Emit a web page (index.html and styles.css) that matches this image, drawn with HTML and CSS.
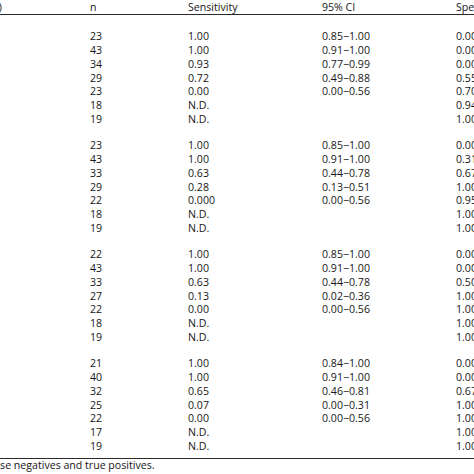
FILE: index.html
```html
<!DOCTYPE html>
<html lang="en">
<head>
<meta charset="utf-8">
<title>Diagnostic accuracy table</title>
<link rel="stylesheet" href="styles.css">
</head>
<body>
<div class="page">
  <div class="row head">
    <div class="c label"><span>Cut-off (mg/L)</span></div>
    <div class="c">n</div>
    <div class="c">Sensitivity</div>
    <div class="c">95% CI</div>
    <div class="c">Specificity</div>
  </div>
  <div class="body">
    <div class="group">
      <div class="row"><div class="c"></div><div class="c">23</div><div class="c">1.00</div><div class="c">0.85−1.00</div><div class="c">0.00</div></div>
      <div class="row"><div class="c"></div><div class="c">43</div><div class="c">1.00</div><div class="c">0.91−1.00</div><div class="c">0.00</div></div>
      <div class="row"><div class="c"></div><div class="c">34</div><div class="c">0.93</div><div class="c">0.77−0.99</div><div class="c">0.00</div></div>
      <div class="row"><div class="c"></div><div class="c">29</div><div class="c">0.72</div><div class="c">0.49−0.88</div><div class="c">0.55</div></div>
      <div class="row"><div class="c"></div><div class="c">23</div><div class="c">0.00</div><div class="c">0.00−0.56</div><div class="c">0.70</div></div>
      <div class="row"><div class="c"></div><div class="c">18</div><div class="c">N.D.</div><div class="c"></div><div class="c">0.94</div></div>
      <div class="row"><div class="c"></div><div class="c">19</div><div class="c">N.D.</div><div class="c"></div><div class="c">1.00</div></div>
    </div>
    <div class="group">
      <div class="row"><div class="c"></div><div class="c">23</div><div class="c">1.00</div><div class="c">0.85−1.00</div><div class="c">0.00</div></div>
      <div class="row"><div class="c"></div><div class="c">43</div><div class="c">1.00</div><div class="c">0.91−1.00</div><div class="c">0.31</div></div>
      <div class="row"><div class="c"></div><div class="c">33</div><div class="c">0.63</div><div class="c">0.44−0.78</div><div class="c">0.67</div></div>
      <div class="row"><div class="c"></div><div class="c">29</div><div class="c">0.28</div><div class="c">0.13−0.51</div><div class="c">1.00</div></div>
      <div class="row"><div class="c"></div><div class="c">22</div><div class="c">0.000</div><div class="c">0.00−0.56</div><div class="c">0.95</div></div>
      <div class="row"><div class="c"></div><div class="c">18</div><div class="c">N.D.</div><div class="c"></div><div class="c">1.00</div></div>
      <div class="row"><div class="c"></div><div class="c">19</div><div class="c">N.D.</div><div class="c"></div><div class="c">1.00</div></div>
    </div>
    <div class="group">
      <div class="row"><div class="c"></div><div class="c">22</div><div class="c">1.00</div><div class="c">0.85−1.00</div><div class="c">0.00</div></div>
      <div class="row"><div class="c"></div><div class="c">43</div><div class="c">1.00</div><div class="c">0.91−1.00</div><div class="c">0.00</div></div>
      <div class="row"><div class="c"></div><div class="c">33</div><div class="c">0.63</div><div class="c">0.44−0.78</div><div class="c">0.50</div></div>
      <div class="row"><div class="c"></div><div class="c">27</div><div class="c">0.13</div><div class="c">0.02−0.36</div><div class="c">1.00</div></div>
      <div class="row"><div class="c"></div><div class="c">22</div><div class="c">0.00</div><div class="c">0.00−0.56</div><div class="c">1.00</div></div>
      <div class="row"><div class="c"></div><div class="c">18</div><div class="c">N.D.</div><div class="c"></div><div class="c">1.00</div></div>
      <div class="row"><div class="c"></div><div class="c">19</div><div class="c">N.D.</div><div class="c"></div><div class="c">1.00</div></div>
    </div>
    <div class="group">
      <div class="row"><div class="c"></div><div class="c">21</div><div class="c">1.00</div><div class="c">0.84−1.00</div><div class="c">0.00</div></div>
      <div class="row"><div class="c"></div><div class="c">40</div><div class="c">1.00</div><div class="c">0.91−1.00</div><div class="c">0.00</div></div>
      <div class="row"><div class="c"></div><div class="c">32</div><div class="c">0.65</div><div class="c">0.46−0.81</div><div class="c">0.67</div></div>
      <div class="row"><div class="c"></div><div class="c">25</div><div class="c">0.07</div><div class="c">0.00−0.31</div><div class="c">1.00</div></div>
      <div class="row"><div class="c"></div><div class="c">22</div><div class="c">0.00</div><div class="c">0.00−0.56</div><div class="c">1.00</div></div>
      <div class="row"><div class="c"></div><div class="c">17</div><div class="c">N.D.</div><div class="c"></div><div class="c">1.00</div></div>
      <div class="row"><div class="c"></div><div class="c">19</div><div class="c">N.D.</div><div class="c"></div><div class="c">1.00</div></div>
    </div>
  </div>
  <p class="note">false negatives and true positives.</p>
</div>
</body>
</html>
```

FILE: styles.css
```css
html, body {
  margin: 0;
  padding: 0;
  background: #ffffff;
}

body {
  width: 474px;
  height: 474px;
  overflow: hidden;
  font-family: "Open Sans", "DejaVu Sans", sans-serif;
  font-size: 10.6px;
  color: #161616;
}

.page {
  margin-left: -60px;
  width: 620px;
}

.row {
  display: grid;
  grid-template-columns: 150px 98px 134px 134px 104px;
  height: 13.83px;
  line-height: 13.83px;
  white-space: nowrap;
}

.head {
  height: 13px;
  line-height: 12px;
  padding-top: 0.5px;
  border-bottom: 1.6px solid #2a2a2a;
}

.head .label {
  display: flex;
  justify-content: flex-end;
  padding-right: 88px;
}

.label span {
  flex: none;
}

.body {
  padding-top: 3.4px;
  padding-bottom: 4.6px;
  border-bottom: 1.8px solid #2a2a2a;
}

.group {
  padding-top: 12.2px;
}

.note {
  margin: 0;
  padding-left: 48px;
  line-height: 13px;
}
```
